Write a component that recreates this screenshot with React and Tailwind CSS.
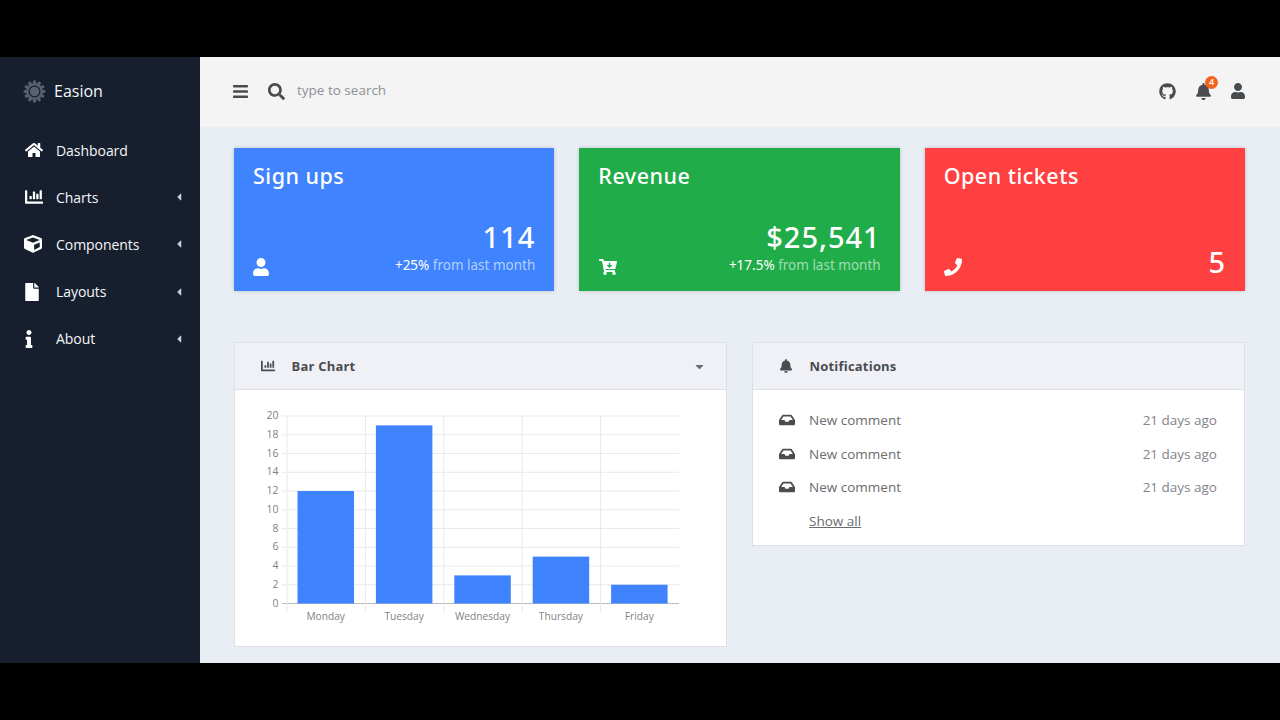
import {
  FaBars, FaBell, FaCaretDown, FaCaretLeft, FaCartArrowDown, FaChartBar, FaCube, FaFile, FaGithub,
  FaHome, FaInbox, FaInfo, FaPhone, FaSearch, FaUser,
} from 'react-icons/fa';

const NAV_ITEMS = [
  { label: 'Dashboard', icon: FaHome, iconClass: '' },
  { label: 'Charts', icon: FaChartBar, caret: true, iconClass: '' },
  { label: 'Components', icon: FaCube, caret: true, iconClass: 'ml-[-1px]' },
  { label: 'Layouts', icon: FaFile, caret: true, iconClass: 'ml-[-2px]' },
  { label: 'About', icon: FaInfo, caret: true, iconClass: 'ml-[-5px]' },
];

const BARS = [
  { day: 'Monday', value: 12 },
  { day: 'Tuesday', value: 19 },
  { day: 'Wednesday', value: 3 },
  { day: 'Thursday', value: 5 },
  { day: 'Friday', value: 2 },
];

function Logo() {
  const teeth = Array.from({ length: 12 }, (_, i) => i * 30);
  return (
    <svg viewBox="0 0 24 24" className="h-[23px] w-[23px] text-[#56606f]" fill="currentColor">
      {teeth.map((angle) => (
        <path key={angle} d="M10.6 0.6h2.8l0.6 4h-4z" transform={`rotate(${angle} 12 12)`} />
      ))}
      <circle cx="12" cy="12" r="8.6" />
      <circle cx="12" cy="12" r="6.2" fill="#171f2e" />
      <circle cx="12" cy="12" r="5" />
    </svg>
  );
}

function Sidebar() {
  return (
    <aside className="w-[200px] shrink-0 bg-[#171f2e] text-white">
      <div className="flex h-[69.5px] items-center pl-[23px]">
        <Logo />
        <span className="ml-[8px] pb-[2px] text-[16px] font-medium text-[#f4f6f8]">Easion</span>
      </div>
      <nav className="flex flex-col">
        {NAV_ITEMS.map(({ label, icon: Icon, caret, iconClass }) => (
          <div key={label} className="flex h-[47.2px] items-center pl-[25px] pr-[15px]">
            <span className="flex w-[18px]"><Icon className={`shrink-0 text-[18px] ${iconClass}`} /></span>
            <span className="ml-[13px] flex-1 text-[14px] font-medium tracking-[-0.05px] text-[#f4f6f8]">{label}</span>
            {caret && <FaCaretLeft className="text-[12px] text-[#c9ced6]" />}
          </div>
        ))}
      </nav>
    </aside>
  );
}

function Header() {
  return (
    <header className="flex h-[70px] items-center bg-[#f4f4f4] pb-[2px] pl-[32px] pr-[34px] text-[#484b50]">
      <FaBars className="text-[17px]" />
      <FaSearch className="ml-[19px] text-[17px]" />
      <span className="ml-[12px] flex-1 pb-[1px] text-[13.5px] text-[#8d9094]">type to search</span>
      <FaGithub className="text-[17px]" />
      <span className="relative ml-[19px] flex">
        <FaBell className="text-[17px]" />
        <span className="absolute left-[10px] top-[-7px] flex h-[13px] w-[13px] items-center justify-center rounded-full bg-[#f4631e] text-[9px] font-semibold text-white">4</span>
      </span>
      <FaUser className="ml-[18px] text-[16px]" />
    </header>
  );
}

function StatCard({ title, value, change, note, icon: Icon, iconClass, color, noteColor }) {
  return (
    <div className={`flex h-[143px] flex-col px-[19px] pb-[15px] pt-[13px] text-white shadow-[0_0_4px_rgba(0,0,0,0.18)] ${color}`}>
      <h2 className="text-[21.5px] font-medium leading-[30px] tracking-[0.5px]">{title}</h2>
      <div className="mt-auto flex items-end justify-between">
        <Icon className={`text-[18px] ${iconClass}`} />
        <div className="text-right">
          <div className={`text-[29px] font-medium leading-[34px] tracking-[1px] ${change ? '' : 'mb-[-3px]'}`}>{value}</div>
          {change && (
            <div className="mt-[2px] pb-[2px] text-[13.5px] leading-[18px]">
              {change} <span className={noteColor}>{note}</span>
            </div>
          )}
        </div>
      </div>
    </div>
  );
}

function BarChart() {
  const left = 287;
  const right = 679;
  const top = 416;
  const bottom = 603.5;
  const step = (bottom - top) / 10;
  const col = (right - left) / 5;
  const ticks = Array.from({ length: 11 }, (_, i) => i * 2);

  return (
    <svg viewBox="235 390 491 256" className="block h-[256px] w-[491px]">
      {ticks.map((tick, i) => {
        const y = bottom - i * step;
        return (
          <g key={tick}>
            <line x1={left - 5} x2={right} y1={y} y2={y} stroke={tick === 0 ? '#b9bdc2' : '#e9e9e9'} />
            <text x={278.5} y={y + 3.2} textAnchor="end" fontSize="10.5" fill="#808285">{tick}</text>
          </g>
        );
      })}
      {[0, 1, 2, 3, 4].map((i) => (
        <line key={i} x1={left + i * col} x2={left + i * col} y1={top} y2={bottom + 9} stroke="#e9e9e9" />
      ))}
      {BARS.map(({ day, value }, i) => (
        <g key={day}>
          <rect x={left + i * col + 10.5} y={bottom - (value / 2) * step} width={56.5} height={(value / 2) * step} fill="#3f83fe" />
          <text x={left + i * col + col / 2 - 0.5} y={619.5} textAnchor="middle" fontSize="10.2" fill="#808285">{day}</text>
        </g>
      ))}
    </svg>
  );
}

function Panel({ icon: Icon, title, action, children, className }) {
  return (
    <section className={`border border-[#dde1e7] bg-white ${className}`}>
      <div className="flex h-[47px] items-center border-b border-[#dde1e7] bg-[#eff1f6] pl-[26px] pr-[20px] text-[#4a4c50]">
        <span className="flex w-[14px]"><Icon className="text-[14px]" /></span>
        <h3 className="ml-[16.5px] flex-1 pt-[1px] text-[13px] font-bold tracking-[0.2px]">{title}</h3>
        {action}
      </div>
      {children}
    </section>
  );
}

function Notifications() {
  return (
    <div className="px-[26px] pt-[13.5px] text-[13.5px] text-[#6a6c70]">
      {[0, 1, 2].map((i) => (
        <div key={i} className="flex h-[33.6px] items-center">
          <FaInbox className="text-[16px] text-[#4a4c50]" />
          <span className="ml-[14px] flex-1">New comment</span>
          <span className="mr-[1px] text-[#838589]">21 days ago</span>
        </div>
      ))}
      <div className="flex h-[33.6px] items-center pl-[30px]">
        <a className="underline">Show all</a>
      </div>
    </div>
  );
}

export default function App() {
  return (
    <div className="flex h-[720px] w-[1280px] flex-col overflow-hidden bg-black font-['Open_Sans',sans-serif]">
      <div className="h-[57px] shrink-0" />
      <div className="flex h-[606px] shrink-0">
        <Sidebar />
        <main className="flex-1 overflow-hidden bg-[#e9edf4]">
          <Header />
          <div className="pl-[34px] pr-[35px] pt-[21px]">
            <div className="grid grid-cols-3 gap-[25px] font-['Noto_Sans',sans-serif]">
              <StatCard title="Sign ups" value="114" change="+25%" note="from last month" icon={FaUser} iconClass="ml-[-1px]" color="bg-[#3f83fe]" noteColor="text-[#b5cffd]" />
              <StatCard title="Revenue" value="$25,541" change="+17.5%" note="from last month" icon={FaCartArrowDown} iconClass="ml-[1px]" color="bg-[#20ac48]" noteColor="text-[#a3dcb3]" />
              <StatCard title="Open tickets" value="5" icon={FaPhone} iconClass="" color="bg-[#fe4040]" />
            </div>
            <div className="mt-[51px] grid grid-cols-2 items-start gap-[25px]">
              <Panel
                icon={FaChartBar}
                title="Bar Chart"
                action={<FaCaretDown className="text-[13px] text-[#6a6c70]" />}
                className="h-[305px]"
              >
                <BarChart />
              </Panel>
              <Panel icon={FaBell} title="Notifications" className="h-[204px]">
                <Notifications />
              </Panel>
            </div>
          </div>
        </main>
      </div>
    </div>
  );
}
